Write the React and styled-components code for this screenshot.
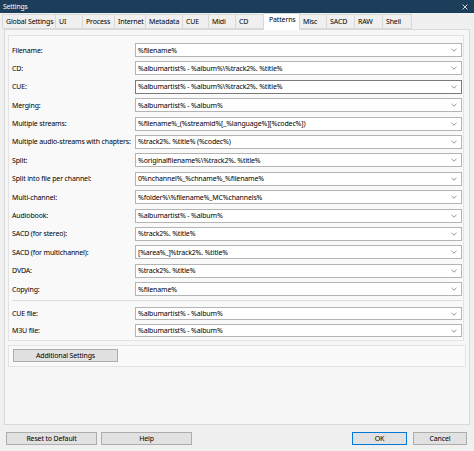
import React from 'react';
import styled, { createGlobalStyle } from 'styled-components';

const GlobalStyle = createGlobalStyle`
  html, body {
    margin: 0;
    padding: 0;
    background: #f0f0f0;
  }
  body {
    font-family: "Noto Sans", "Open Sans", sans-serif;
    font-size: 7px;
    letter-spacing: -0.15px;
    color: #000;
  }
`;

const tabs = [
  { name: 'Global Settings', w: 54 },
  { name: 'UI', w: 27 },
  { name: 'Process', w: 32 },
  { name: 'Internet', w: 31 },
  { name: 'Metadata', w: 37 },
  { name: 'CUE', w: 26 },
  { name: 'Midi', w: 27 },
  { name: 'CD', w: 28 },
  { name: 'Patterns', w: 36, active: true },
  { name: 'Misc', w: 27 },
  { name: 'SACD', w: 28 },
  { name: 'RAW', w: 28 },
  { name: 'Shell', w: 29 },
];

const patterns = [
  ['Filename:', '%filename%'],
  ['CD:', '%albumartist% - %album%\\%track2%. %title%'],
  ['CUE:', '%albumartist% - %album%\\%track2%. %title%', true],
  ['Merging:', '%albumartist% - %album%'],
  ['Multiple streams:', '%filename%_(%streamid%[_%language%][%codec%])'],
  ['Multiple audio-streams with chapters:', '%track2%. %title% (%codec%)'],
  ['Split:', '%originalfilename%\\%track2%. %title%'],
  ['Split into file per channel:', '0%nchannel%_%chname%_%filename%'],
  ['Multi-channel:', '%folder%\\%filename%_MC%channels%'],
  ['Audiobook:', '%albumartist% - %album%'],
  ['SACD (for stereo):', '%track2%. %title%'],
  ['SACD (for multichannel):', '[%area%_]%track2%. %title%'],
  ['DVDA:', '%track2%. %title%'],
  ['Copying:', '%filename%'],
];

const playlists = [
  ['CUE file:', '%albumartist% - %album%'],
  ['M3U file:', '%albumartist% - %album%'],
];

const Window = styled.div`
  width: 474px;
  height: 451px;
  display: flex;
  flex-direction: column;
  background: #f0f0f0;
  overflow: hidden;
`;

const TitleBar = styled.div`
  height: 13px;
  flex: none;
  background: #1c3e5a;
  color: #fff;
  display: flex;
  align-items: center;
  justify-content: space-between;
  padding: 0 6px 0 3px;
  font-size: 6.8px;
`;

const TabStrip = styled.div`
  height: 16px;
  flex: none;
  display: flex;
  align-items: flex-end;
  padding-left: 2px;
  position: relative;
  z-index: 1;
`;

const Tab = styled.div`
  width: ${(p) => p.w}px;
  height: ${(p) => (p.active ? 17 : 15)}px;
  margin-bottom: ${(p) => (p.active ? -1 : 0)}px;
  box-sizing: border-box;
  padding: ${(p) => (p.active ? '1px 0 0 5px' : '2px 0 0 3px')};
  background: ${(p) => (p.active ? '#fff' : '#f0f0f0')};
  border: 1px solid #d9d9d9;
  border-left: none;
  border-bottom: ${(p) => (p.active ? 'none' : '1px solid #d9d9d9')};
  white-space: nowrap;
  overflow: hidden;
  &:first-child {
    border-left: 1px solid #d9d9d9;
  }
`;

const Page = styled.div`
  height: 396px;
  flex: none;
  margin: 0 4px;
  box-sizing: border-box;
  background: #f7f7f7;
  border: 1px solid #d9d9d9;
  padding: 5px 3px 0 3px;
  display: flex;
  flex-direction: column;
  gap: 4px;
`;

const Group = styled.div`
  background: #f9f9f9;
  border: 1px solid #e3e3e3;
  padding: ${(p) => p.pad};
  margin-right: ${(p) => p.mr || 0}px;
  display: flex;
  flex-direction: column;
`;

const Rows = styled.div`
  display: flex;
  flex-direction: column;
  gap: ${(p) => p.gap}px;
`;

const Row = styled.div`
  display: grid;
  grid-template-columns: 123px 327px;
  align-items: center;
`;

const Label = styled.span`
  white-space: nowrap;
`;

const Combo = styled.div`
  height: ${(p) => p.h}px;
  box-sizing: border-box;
  background: #fff;
  border: 1px solid ${(p) => (p.hot ? '#7a7a7a' : '#b4b4b4')};
  display: flex;
  align-items: center;
  justify-content: space-between;
  padding: 0 4px 0 2px;
  white-space: nowrap;
  overflow: hidden;
`;

const Separator = styled.div`
  height: 1px;
  background: #dcdcdc;
  margin: ${(p) => p.m};
`;

const Button = styled.div`
  width: ${(p) => p.w}px;
  height: 13px;
  box-sizing: border-box;
  background: #e1e1e1;
  border: 1px solid ${(p) => (p.primary ? '#0078d7' : '#adadad')};
  display: flex;
  align-items: center;
  justify-content: center;
  white-space: nowrap;
`;

const Footer = styled.div`
  flex: 1;
  display: flex;
  align-items: center;
  justify-content: space-between;
  padding: 0 7px 0 6px;
`;

const ButtonGroup = styled.div`
  display: flex;
  gap: ${(p) => p.gap}px;
`;

const Chevron = () => (
  <svg width="6" height="4" viewBox="0 0 6 4">
    <polyline points="0.5,0.8 3,3.2 5.5,0.8" fill="none" stroke="#777" strokeWidth="0.8" />
  </svg>
);

const CloseIcon = () => (
  <svg width="6" height="6" viewBox="0 0 6 6">
    <path d="M0.5 0.5 L5.5 5.5 M5.5 0.5 L0.5 5.5" stroke="#fff" strokeWidth="0.8" />
  </svg>
);

const PatternRow = ({ label, value, hot, h }) => (
  <Row>
    <Label>{label}</Label>
    <Combo hot={hot} h={h}>
      <span>{value}</span>
      <Chevron />
    </Combo>
  </Row>
);

export default function App() {
  return (
    <>
      <GlobalStyle />
      <Window>
        <TitleBar>
          <span>Settings</span>
          <CloseIcon />
        </TitleBar>
        <TabStrip>
          {tabs.map((t) => (
            <Tab key={t.name} w={t.w} active={t.active}>
              {t.name}
            </Tab>
          ))}
        </TabStrip>
        <Page>
          <Group pad="7px 1px 3px 3px" mr={2}>
            <Rows gap={4.4}>
              {patterns.map(([label, value, hot]) => (
                <PatternRow key={label} label={label} value={value} hot={hot} h={14} />
              ))}
            </Rows>
            <Separator m="4px 0 6px 0" />
            <Rows gap={4}>
              {playlists.map(([label, value]) => (
                <PatternRow key={label} label={label} value={value} h={13} />
              ))}
            </Rows>
          </Group>
          <Group pad="3px 4px 4px 4px">
            <Button w={105}>Additional Settings</Button>
          </Group>
        </Page>
        <Footer>
          <ButtonGroup gap={4}>
            <Button w={91}>Reset to Default</Button>
            <Button w={91}>Help</Button>
          </ButtonGroup>
          <ButtonGroup gap={6}>
            <Button w={55} primary>
              OK
            </Button>
            <Button w={54}>Cancel</Button>
          </ButtonGroup>
        </Footer>
      </Window>
    </>
  );
}
